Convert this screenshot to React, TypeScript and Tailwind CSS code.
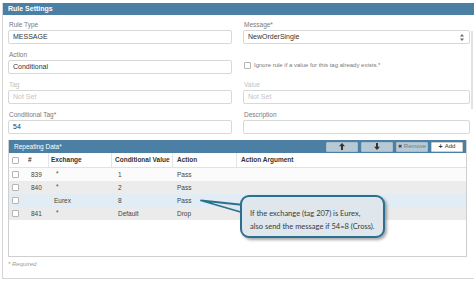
const SANS = "font-['Liberation_Sans',Arial,sans-serif]";

interface Row { id: string; exchange: string; cond: string; action: string; bg: string; }

const ROWS: Row[] = [
  { id: "839", exchange: "*", cond: "1", action: "Pass", bg: "bg-[#fbfbfb]" },
  { id: "840", exchange: "*", cond: "2", action: "Pass", bg: "bg-[#ececec]" },
  { id: "", exchange: "Eurex", cond: "8", action: "Pass", bg: "bg-[#e1ecf5]" },
  { id: "841", exchange: "*", cond: "Default", action: "Drop", bg: "bg-[#ebebeb]" },
];

function Check() {
  return <span className="block w-[7px] h-[7px] border border-[#b5b5b5] rounded-[1px] bg-white" />;
}

function Field({ label, value, disabled, select }: { label: string; value?: string; disabled?: boolean; select?: boolean }) {
  return (
    <div>
      <div className={`h-[10px] leading-[10px] text-[6.5px] pl-px ${disabled ? "text-[#c2c2c2]" : "text-[#7a7a7a]"}`}>{label}</div>
      <div className="h-[14px] border border-[#d8d8d8] rounded-[2px] bg-white flex items-center px-[4px]">
        <span className={`text-[7px] flex-1 ${disabled ? "text-[#c4c4c4]" : "text-[#333]"}`}>{value}</span>
        {select && (
          <svg width="4" height="7" viewBox="0 0 4 7" className="mr-[1px]">
            <path d="M2 0 L4 2.6 H0 Z M2 7 L4 4.4 H0 Z" fill="#666" />
          </svg>
        )}
      </div>
    </div>
  );
}

function Arrow({ down }: { down?: boolean }) {
  return (
    <svg width="6" height="7" viewBox="0 0 6 7" className={down ? "rotate-180" : ""}>
      <path d="M3 0 L6 3.2 H4 V7 H2 V3.2 H0 Z" fill="#333" />
    </svg>
  );
}

export default function App() {
  return (
    <div className={`relative w-[474px] h-[285px] overflow-hidden bg-white ${SANS}`}>
      <div className="ml-[2px] mt-[3px] w-[480px] h-[276px] border-x border-b border-[#d6d6d6]">
        <div className="h-[12px] bg-[#4b7fa3] text-white text-[7px] font-bold leading-[12px] pl-[5px]">Rule Settings</div>

        <div className="pl-[5px] pt-[5px] w-[467px]">
          {/* form fields */}
          <div className="grid grid-cols-[224px_227px] gap-x-[11px] gap-y-[6px]">
            <Field label="Rule Type" value="MESSAGE" />
            <Field label="Message*" value="NewOrderSingle" select />
            <Field label="Action" value="Conditional" />
            <div className="flex items-center gap-[3px] pt-[7px] pl-px">
              <Check />
              <span className="text-[6px] text-[#7a7a7a]">Ignore rule if a value for this tag already exists.*</span>
            </div>
            <Field label="Tag" value="Not Set" disabled />
            <Field label="Value" value="Not Set" disabled />
            <Field label="Conditional Tag*" value="54" />
            <Field label="Description" value="" />
          </div>

          {/* repeating data */}
          <div className="mt-[6px] w-[459px] h-[117px] border-x border-b border-[#cfcfcf] flex flex-col">
            <div className="h-[13px] bg-[#4b7fa3] flex items-center pl-[5px] pr-[3px]">
              <span className="text-white text-[6.5px] flex-1">Repeating Data*</span>
              <div className="flex gap-[3px]">
                <button className="w-[32px] h-[10px] bg-[#b8c9d6] border border-[#a9bccb] rounded-[1px] flex items-center justify-center"><Arrow /></button>
                <button className="w-[32px] h-[10px] bg-[#b8c9d6] border border-[#a9bccb] rounded-[1px] flex items-center justify-center"><Arrow down /></button>
                <button className="w-[32px] h-[10px] bg-[#b8c9d6] border border-[#a9bccb] rounded-[1px] flex items-center justify-center gap-[2px] text-[6px] text-[#687b89]">
                  <span className="text-[5px] text-[#2f3f4c]">✖</span>Remove
                </button>
                <button className="w-[32px] h-[10px] bg-white border border-[#cfcfcf] rounded-[1px] flex items-center justify-center gap-[2px] text-[6px] text-[#333]">
                  <span className="font-bold text-[7px] leading-none">+</span>Add
                </button>
              </div>
            </div>

            <div className="grid grid-cols-[15px_25px_63px_61px_64px_66px_1fr] h-[15px] items-center border-b border-[#e2e2e2] text-[6.5px] font-bold text-[#333]">
              <div className="pl-[3px]"><Check /></div>
              <div className="pl-[4px] h-full flex items-center border-r border-[#e4e4e4]">#</div>
              <div className="pl-[2px] h-full flex items-center border-r border-[#e4e4e4]">Exchange</div>
              <div className="pl-[3px] h-full flex items-center border-r border-[#e4e4e4]">Conditional Value</div>
              <div className="pl-[4px] h-full flex items-center border-r border-[#e4e4e4]">Action</div>
              <div className="pl-[4px] h-full flex items-center">Action Argument</div>
              <div />
            </div>

            {ROWS.map((r, i) => (
              <div key={i} className={`grid grid-cols-[15px_25px_63px_61px_64px_66px_1fr] h-[13px] items-center text-[6.5px] text-[#444] ${r.bg}`}>
                <div className="pl-[3px]"><Check /></div>
                <div className="pl-[7px]">{r.id}</div>
                <div className={r.exchange === "*" ? "pl-[7px] -mt-[2px]" : "pl-[5px]"}>{r.exchange}</div>
                <div className="pl-[6px]">{r.cond}</div>
                <div className="pl-[4px]">{r.action}</div>
                <div />
                <div />
              </div>
            ))}
            <div className="flex-1 bg-white" />
          </div>

          <div className="mt-[2px] h-[10px] leading-[10px] text-[6px] italic text-[#9a9a9a]">* Required</div>
        </div>
      </div>

      {/* scrollbar track */}
      <div className="absolute left-[471px] top-[31px] w-[2px] h-[78px] bg-[#e2e2e2]" />

      {/* callout pointer */}
      <svg className="absolute left-[196px] top-[196px]" width="52" height="24" viewBox="0 0 52 24">
        <path d="M5 4.5 L48 9 L48 17 Z" fill="#dfe7ec" stroke="#2d6f8f" strokeWidth="1.8" strokeLinejoin="round" />
      </svg>

      {/* callout */}
      <div className="absolute left-[240px] top-[195px] w-[145px] h-[43px] rounded-[9px] border-2 border-[#2d6f8f] bg-[#dfe7ec] shadow-[2px_2px_3px_rgba(0,0,0,0.35)] pl-[8px] pt-[10px] font-['Lato',sans-serif] text-[7.5px] leading-[13px] text-[#3a3a3a]">
        <div>If the exchange (tag 207) is Eurex,</div>
        <div>also send the message if 54=8 (Cross).</div>
      </div>
    </div>
  );
}
